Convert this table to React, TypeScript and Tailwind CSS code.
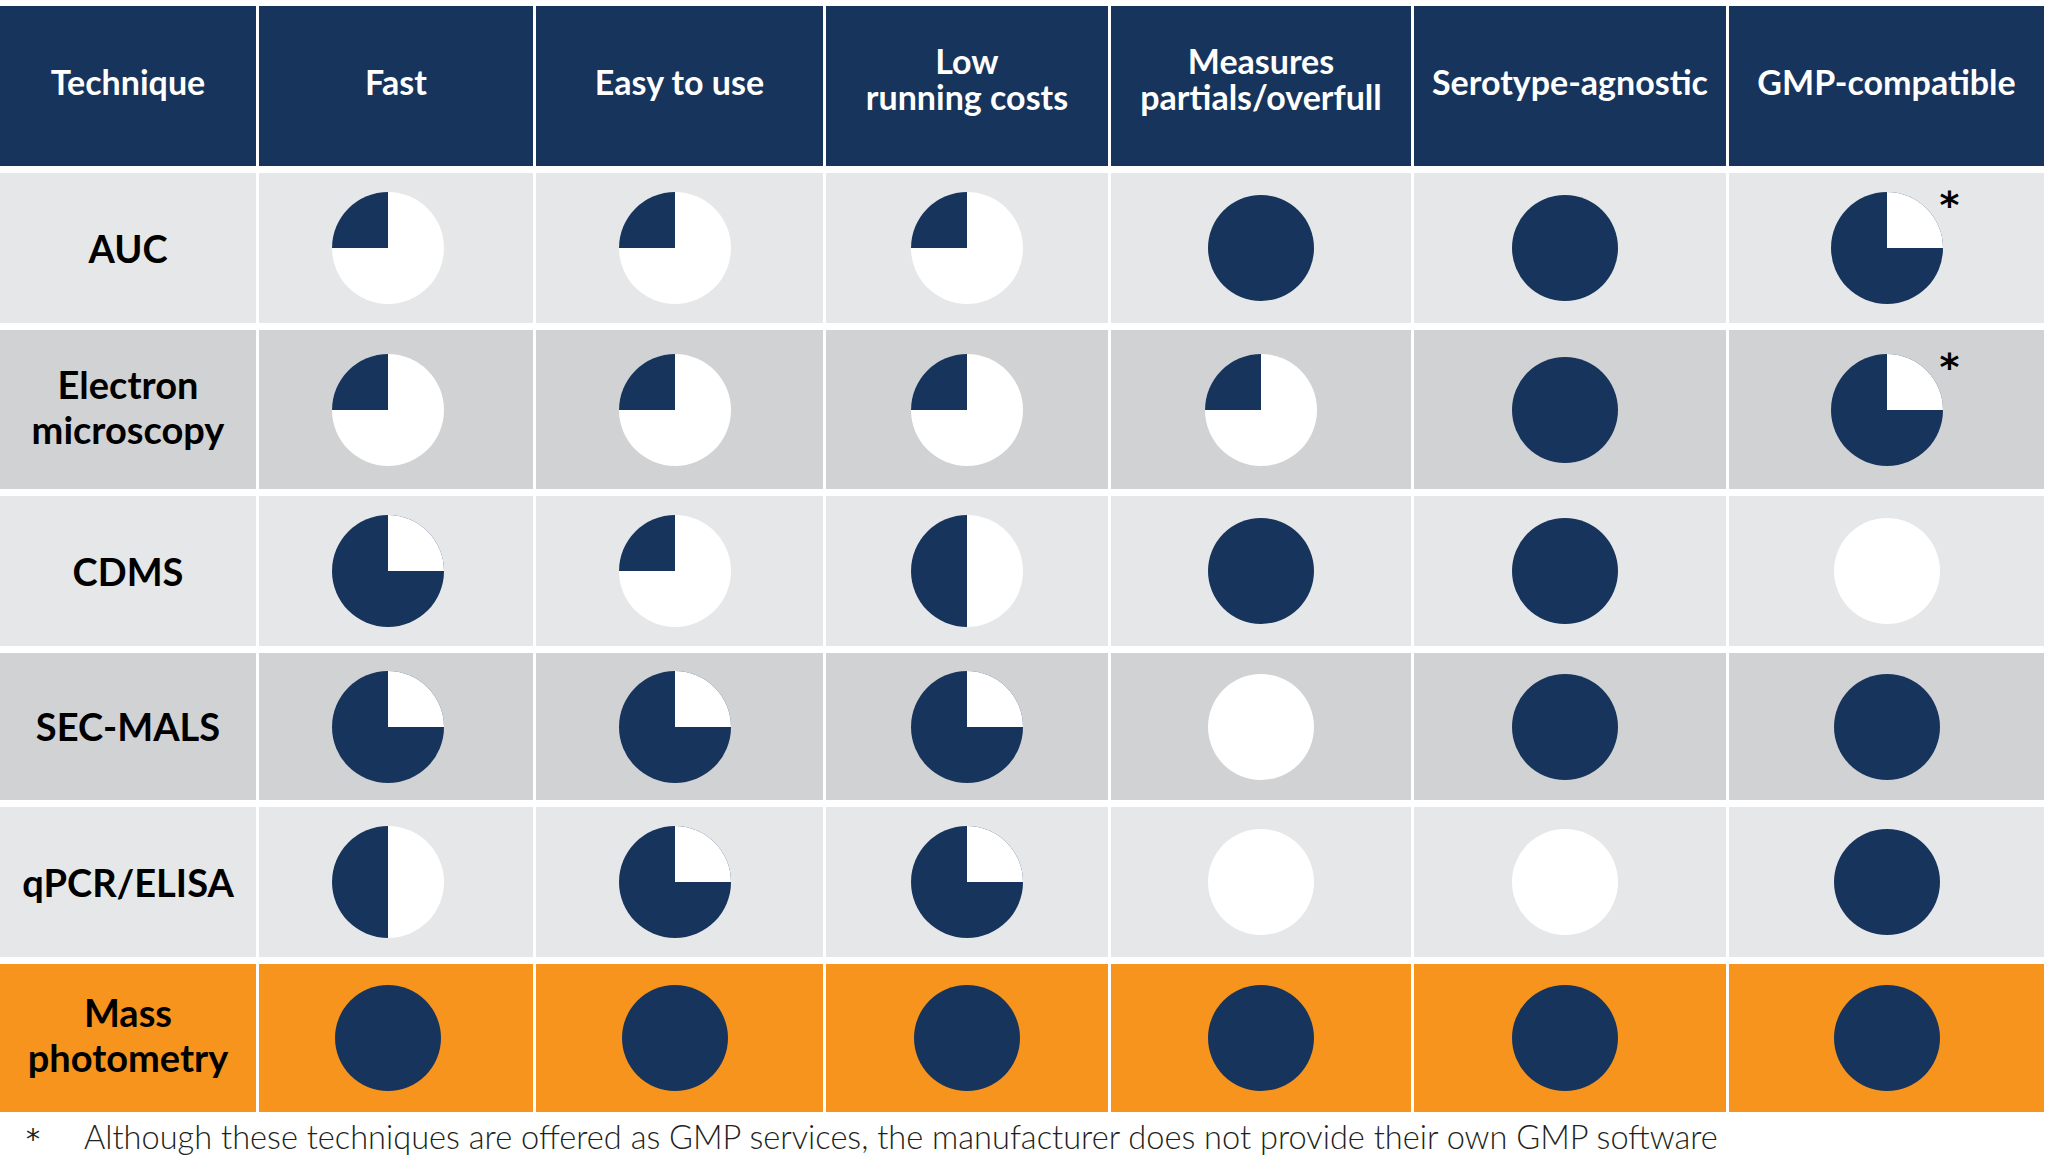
import React from "react";

type P = "q" | "tq" | "h" | "f" | "e";

const NAVY = "#17345c";

function Pie({ t, star }: { t: P; star?: boolean }) {
  const partial = t === "q" || t === "tq" || t === "h";
  const size = partial ? 112 : 106;
  return (
    <div className="relative" style={{ width: size, height: size }}>
      <svg width={size} height={size} viewBox="0 0 112 112" className="block">
        {t === "f" && <circle cx="56" cy="56" r="56" fill={NAVY} />}
        {t === "e" && <circle cx="56" cy="56" r="56" fill="#ffffff" />}
        {t === "q" && (
          <>
            <circle cx="56" cy="56" r="56" fill="#ffffff" />
            <path d="M56 56 L0 56 A56 56 0 0 1 56 0 Z" fill={NAVY} />
          </>
        )}
        {t === "tq" && (
          <>
            <circle cx="56" cy="56" r="56" fill={NAVY} />
            <path d="M56 56 L56 0 A56 56 0 0 1 112 56 Z" fill="#ffffff" />
          </>
        )}
        {t === "h" && (
          <>
            <circle cx="56" cy="56" r="56" fill="#ffffff" />
            <path d="M56 0 A56 56 0 0 0 56 112 Z" fill={NAVY} />
          </>
        )}
      </svg>
      {star && (
        <span
          className="absolute left-[109px] top-[-6px] text-[38px] font-bold leading-none text-black"
          style={{ fontFamily: "'DejaVu Sans', sans-serif" }}
        >
          *
        </span>
      )}
    </div>
  );
}

const headers = [
  ["Technique"],
  ["Fast"],
  ["Easy to use"],
  ["Low", "running costs"],
  ["Measures", "partials/overfull"],
  ["Serotype-agnostic"],
  ["GMP-compatible"],
];

const rows: { label: string[]; bg: string; cells: P[]; stars?: boolean }[] = [
  { label: ["AUC"], bg: "bg-[#e6e7e8]", cells: ["q", "q", "q", "f", "f", "tq"], stars: true },
  { label: ["Electron", "microscopy"], bg: "bg-[#d1d2d4]", cells: ["q", "q", "q", "q", "f", "tq"], stars: true },
  { label: ["CDMS"], bg: "bg-[#e6e7e8]", cells: ["tq", "q", "h", "f", "f", "e"] },
  { label: ["SEC-MALS"], bg: "bg-[#d1d2d4]", cells: ["tq", "tq", "tq", "e", "f", "f"] },
  { label: ["qPCR/ELISA"], bg: "bg-[#e6e7e8]", cells: ["h", "tq", "tq", "e", "e", "f"] },
  { label: ["Mass", "photometry"], bg: "bg-[#f7941e]", cells: ["f", "f", "f", "f", "f", "f"] },
];

const colPad = ["pr-[16px]", "pr-[10px]", "", "", "pr-[10px]", ""];

function Lines({ lines }: { lines: string[] }) {
  return (
    <p className="whitespace-nowrap">
      {lines.map((l, j) => (
        <React.Fragment key={j}>
          {j > 0 && <br />}
          {l}
        </React.Fragment>
      ))}
    </p>
  );
}

export default function App() {
  return (
    <div
      className="w-[2048px] h-[1163px] bg-white overflow-hidden"
      style={{ fontFamily: "Lato, 'Open Sans', sans-serif" }}
    >
      <div className="pt-[6px] pr-[4px]">
        <div className="grid grid-cols-[256px_274px_287px_282px_300px_312px_315px] grid-rows-[160px_150px_159px_150px_147px_150px_148px] gap-x-[3px] gap-y-[7px]">
          {headers.map((h, i) => (
            <div
              key={i}
              className={`bg-[#17345c] flex items-center justify-center ${h.length > 1 ? "pb-[14px]" : "pb-[8px]"} text-white font-bold text-[34px] leading-[36px] text-center`}
            >
              <Lines lines={h} />
            </div>
          ))}
          {rows.map((r, ri) => (
            <React.Fragment key={ri}>
              <div
                className={`${r.bg} flex items-center justify-center ${r.label.length > 1 ? "pb-[6px]" : ""} text-black font-bold text-[38px] leading-[45px] text-center`}
              >
                <Lines lines={r.label} />
              </div>
              {r.cells.map((c, ci) => (
                <div
                  key={ci}
                  className={`${r.bg} flex items-center justify-center ${colPad[ci]}`}
                >
                  <Pie t={c} star={r.stars && ci === 5} />
                </div>
              ))}
            </React.Fragment>
          ))}
        </div>
        <div className="flex items-baseline pt-[5px] text-[#231f20] font-light text-[32.6px] leading-[40px]">
          <span className="w-[84px] pl-[26px] text-[28px] font-normal" style={{ fontFamily: "'DejaVu Sans', sans-serif" }}>
            *
          </span>
          <span className="whitespace-nowrap">
            Although these techniques are offered as GMP services, the manufacturer does not provide their own GMP software
          </span>
        </div>
      </div>
    </div>
  );
}
